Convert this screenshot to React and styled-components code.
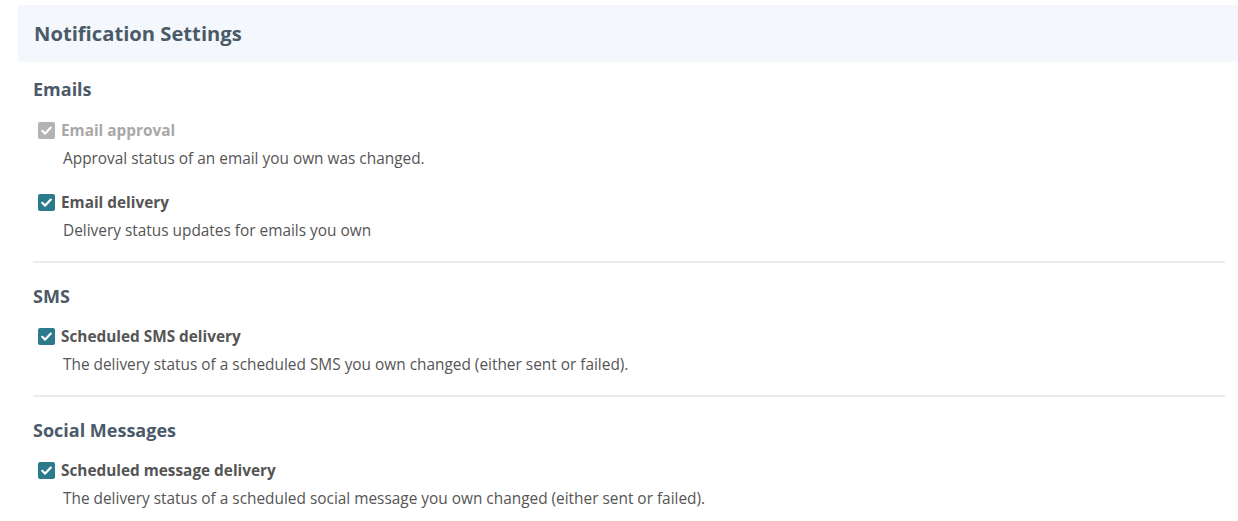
import React from 'react';
import styled, { createGlobalStyle } from 'styled-components';

const GlobalStyle = createGlobalStyle`
  body {
    margin: 0;
    background: #ffffff;
    font-family: "Open Sans", "Noto Sans", sans-serif;
  }
`;

const Page = styled.div`
  padding: 5px 0 0 18px;
`;

const Header = styled.div`
  background: #f4f8fc;
  height: 57px;
  box-sizing: border-box;
  display: flex;
  align-items: center;
  padding: 0 0 2px 16px;
`;

const Title = styled.h1`
  margin: 0;
  font-size: 20.2px;
  font-weight: 700;
  color: #4b5a69;
`;

const Body = styled.div`
  padding: 0 13px 0 15px;
`;

const Section = styled.section`
  padding: ${(p) => (p.first ? '15px' : '21px')} 0 19px;
  border-top: ${(p) => (p.first ? 'none' : '2px solid #ececec')};
`;

const SectionTitle = styled.h2`
  margin: 0 0 ${(p) => (p.first ? '10px' : '9px')};
  font-size: 18px;
  font-weight: 700;
  color: #4b5a69;
  line-height: 24px;
`;

const Item = styled.div`
  padding: 8px 0 0 5px;
  & + & {
    margin-top: 13px;
  }
`;

const LabelRow = styled.label`
  display: flex;
  align-items: center;
  gap: 6px;
  font-size: 15.35px;
  font-weight: 700;
  color: ${(p) => (p.disabled ? '#a8a8a8' : '#555555')};
  line-height: 22px;
`;

const Box = styled.span`
  width: 17px;
  height: 17px;
  border-radius: 2px;
  background: ${(p) => (p.disabled ? '#b3b3b3' : '#2b7b8d')};
  display: flex;
  align-items: center;
  justify-content: center;
  flex-shrink: 0;
`;

const Description = styled.div`
  margin: 7px 0 0 25px;
  font-size: 15.4px;
  color: #555555;
  line-height: 22px;
`;

const sections = [
  {
    title: 'Emails',
    items: [
      { label: 'Email approval', desc: 'Approval status of an email you own was changed.', disabled: true },
      { label: 'Email delivery', desc: 'Delivery status updates for emails you own' },
    ],
  },
  {
    title: 'SMS',
    items: [
      { label: 'Scheduled SMS delivery', desc: 'The delivery status of a scheduled SMS you own changed (either sent or failed).' },
    ],
  },
  {
    title: 'Social Messages',
    items: [
      { label: 'Scheduled message delivery', desc: 'The delivery status of a scheduled social message you own changed (either sent or failed).' },
    ],
  },
];

function Check({ disabled }) {
  return (
    <Box disabled={disabled}>
      <svg width="13" height="13" viewBox="0 0 13 13">
        <path d="M2.2 6.8 L5.2 9.6 L10.8 3.6" fill="none" stroke="#fff" strokeWidth="2.2" strokeLinecap="round" strokeLinejoin="round" />
      </svg>
    </Box>
  );
}

export default function App() {
  return (
    <Page>
      <GlobalStyle />
      <Header>
        <Title>Notification Settings</Title>
      </Header>
      <Body>
        {sections.map((s, i) => (
          <Section key={s.title} first={i === 0}>
            <SectionTitle first={i === 0}>{s.title}</SectionTitle>
            {s.items.map((it) => (
              <Item key={it.label}>
                <LabelRow disabled={it.disabled}>
                  <Check disabled={it.disabled} />
                  {it.label}
                </LabelRow>
                <Description>{it.desc}</Description>
              </Item>
            ))}
          </Section>
        ))}
      </Body>
    </Page>
  );
}
